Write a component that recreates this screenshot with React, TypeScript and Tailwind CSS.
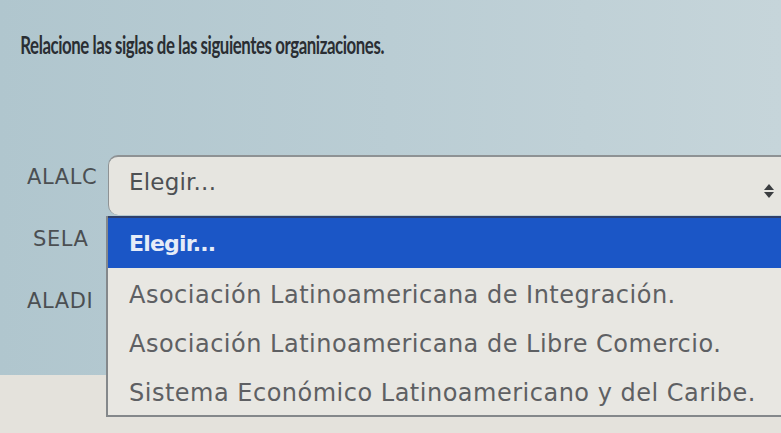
const rows = ["ALALC", "SELA", "ALADI"]

const options = [
  "Asociación Latinoamericana de Integración.",
  "Asociación Latinoamericana de Libre Comercio.",
  "Sistema Económico Latinoamericano y del Caribe.",
]

export default function App() {
  return (
    <div className="relative h-[433px] w-[781px] overflow-hidden bg-[#e4e2dc] font-['DejaVu_Sans',sans-serif]">
      <div className="h-[375px] bg-gradient-to-r from-[#b0c6ce] via-[#bacdd4] to-[#c6d5da]">
        <h1 className="origin-left scale-x-[0.7] whitespace-nowrap pl-[29px] pt-[27px] font-['Lato',sans-serif] text-[24px] font-bold leading-[36px] tracking-[-0.6px] text-[#2a2e33]">
          Relacione las siglas de las siguientes organizaciones.
        </h1>

        <div className="mt-[84px] flex flex-col">
          {rows.map((r, i) => (
            <div key={r} className="flex h-[62px] items-center">
              <span className={`w-[108px] text-[21px] tracking-[0.6px] text-[#4b4f52] ${r === "SELA" ? "pl-[33px]" : "pl-[27px]"}`}>{r}</span>
              {i === 0 && (
                <div className="mt-[14px] flex h-[60px] flex-1 items-center justify-between rounded-l-[10px] border-t-2 border-l border-[#8e9294] bg-[#e6e5e0] pl-[20px] pr-[6px]">
                  <span className="-mt-[8px] text-[23px] tracking-[0.2px] text-[#4d5053]">Elegir...</span>
                  <svg width="12" height="16" viewBox="0 0 12 16" className="mt-[10px]">
                    <path d="M6 1 L11 7 L1 7 Z" fill="#3b3d40" />
                    <path d="M1 9 L11 9 L6 15 Z" fill="#3b3d40" />
                  </svg>
                </div>
              )}
            </div>
          ))}
        </div>
      </div>

      <div className="absolute left-[106px] top-[216px] w-[690px] border-b-2 border-l-2 border-[#84888b] bg-[#e8e7e2]">
        <div className="flex h-[52px] items-center border-t-2 border-[#2f3f6a] bg-[#1b56c6] pl-[21px]">
          <span className="text-[22px] font-bold tracking-[-0.8px] text-[#e6ecf8]">Elegir...</span>
        </div>
        {options.map((o) => (
          <div key={o} className="flex h-[49px] items-center pl-[21px] pt-[4px]">
            <span className="text-[24px] tracking-[0.5px] text-[#5e6063]">{o}</span>
          </div>
        ))}
      </div>
    </div>
  )
}
